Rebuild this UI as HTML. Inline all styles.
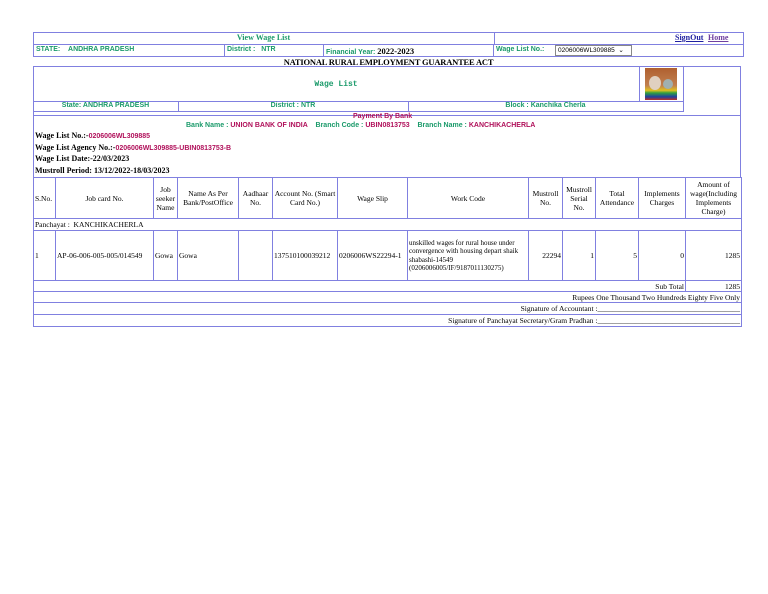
<!DOCTYPE html>
<html><head><meta charset="utf-8"><style>
*{margin:0;padding:0;box-sizing:border-box}
body{width:768px;height:594px;background:#fff;position:relative;overflow:hidden;font-family:"Liberation Serif",serif;font-size:8px;color:#000}
.a{position:absolute}
.b{position:absolute;border:1px solid #8080e0}
.s{font-family:"Liberation Sans","DejaVu Sans",sans-serif;font-weight:bold;font-size:7px}
.g{color:#1a9a6a}.m{color:#b0105a}
table{border-collapse:collapse;position:absolute;left:33px;top:177px;width:708px;table-layout:fixed}
td{border:1px solid #8080e0;font-size:7.5px;text-align:center;line-height:9px;padding:0 1px;overflow:hidden}
.r{text-align:right}.l{text-align:left}
</style></head><body>
<div class="b" style="left:33px;top:32px;width:711px;height:25px;border-width:1.5px"></div>
<div class="b" style="left:33px;top:44px;width:711px;height:1px;border-width:1px 0 0 0"></div>
<div class="b" style="left:494px;top:32px;width:1px;height:13px;border-width:0 0 0 1px"></div>
<div class="b" style="left:224px;top:44px;width:1px;height:13px;border-width:0 0 0 1px"></div>
<div class="b" style="left:323px;top:44px;width:1px;height:13px;border-width:0 0 0 1px"></div>
<div class="b" style="left:493px;top:44px;width:1px;height:13px;border-width:0 0 0 1px"></div>
<div class="a g" style="left:33px;width:461px;top:33px;text-align:center;font-weight:bold;font-size:8px">View Wage List</div>
<div class="a" style="left:675px;top:33px;font-weight:bold;font-size:8px;color:#2020a0;text-decoration:underline">SignOut</div>
<div class="a" style="left:708px;top:33px;font-weight:bold;font-size:8px;color:#7040a0;text-decoration:underline">Home</div>
<div class="a s g" style="left:36px;top:46px">STATE:&nbsp;&nbsp;&nbsp;&nbsp;ANDHRA PRADESH</div>
<div class="a s g" style="left:227px;top:46px">District :&nbsp;&nbsp;&nbsp;NTR</div>
<div class="a s g" style="left:326px;top:46px">Financial Year: <span style="color:#000;font-family:'Liberation Serif',serif;font-size:8.5px">2022-2023</span></div>
<div class="a s g" style="left:496px;top:46px">Wage List No.:</div>
<div class="a" style="left:555px;top:45px;width:77px;height:11px;border:1px solid #888;font-family:'Liberation Sans',sans-serif;font-size:6.5px;line-height:9px;padding-left:2px">0206006WL309885 &nbsp;⌄</div>
<div class="a" style="left:33px;width:711px;top:57px;text-align:center;font-weight:bold;font-size:8.5px;letter-spacing:-0.2px">NATIONAL RURAL EMPLOYMENT GUARANTEE ACT</div>
<div class="b" style="left:33px;top:66px;width:708px;height:50px;border-width:1.5px"></div>
<div class="b" style="left:33px;top:101px;width:651px;height:1px;border-width:1px 0 0 0"></div>
<div class="b" style="left:33px;top:111px;width:651px;height:1px;border-width:1px 0 0 0"></div>
<div class="b" style="left:639px;top:66px;width:1px;height:36px;border-width:0 0 0 1px"></div>
<div class="b" style="left:683px;top:66px;width:1px;height:46px;border-width:0 0 0 1px"></div>
<div class="b" style="left:178px;top:101px;width:1px;height:11px;border-width:0 0 0 1px"></div>
<div class="b" style="left:408px;top:101px;width:1px;height:11px;border-width:0 0 0 1px"></div>
<div class="a g" style="left:33px;width:606px;top:80px;text-align:center;font-family:'Liberation Mono',monospace;font-weight:bold;font-size:8px">Wage List</div>
<div class="a" style="left:645px;top:68px;width:32px;height:32px;background:linear-gradient(#b06030 0,#c08050 55%,#e0c020 70%,#30a040 78%,#2040a0 90%,#c03020 100%)">
<div class="a" style="left:4px;top:8px;width:12px;height:14px;border-radius:50%;background:#e0d0c0"></div>
<div class="a" style="left:18px;top:11px;width:10px;height:10px;border-radius:50%;background:#a0b0b0"></div></div>
<div class="a s g" style="left:33px;width:145px;top:102px;text-align:center">State: ANDHRA PRADESH</div>
<div class="a s g" style="left:178px;width:230px;top:102px;text-align:center">District : NTR</div>
<div class="a s g" style="left:408px;width:275px;top:102px;text-align:center">Block : Kanchika Cherla</div>
<div class="b" style="left:33px;top:116px;width:1px;height:61px;border-width:0 0 0 1px"></div>
<div class="b" style="left:740px;top:116px;width:1px;height:61px;border-width:0 0 0 1px"></div>
<div class="a s m" style="left:353px;top:113px">Payment By Bank</div>
<div class="a s" style="left:186px;top:122px"><span class="g">Bank Name : </span><span class="m">UNION BANK OF INDIA</span>&nbsp;&nbsp;&nbsp;&nbsp;<span class="g">Branch Code : </span><span class="m">UBIN0813753</span>&nbsp;&nbsp;&nbsp;&nbsp;<span class="g">Branch Name : </span><span class="m">KANCHIKACHERLA</span></div>
<div class="a" style="left:35px;top:131px;font-weight:bold">Wage List No.:-<span class="s m">0206006WL309885</span></div>
<div class="a" style="left:35px;top:143px;font-weight:bold">Wage List Agency No.:-<span class="s m">0206006WL309885-UBIN0813753-B</span></div>
<div class="a" style="left:35px;top:154px;font-weight:bold">Wage List Date:-22/03/2023</div>
<div class="a" style="left:35px;top:166px;font-weight:bold">Mustroll Period: 13/12/2022-18/03/2023</div>
<table>
<colgroup><col style="width:22px"><col style="width:98px"><col style="width:24px"><col style="width:61px"><col style="width:34px"><col style="width:65px"><col style="width:70px"><col style="width:121px"><col style="width:34px"><col style="width:33px"><col style="width:43px"><col style="width:47px"><col style="width:56px"></colgroup>
<tr style="height:41px"><td class="l">S.No.</td><td>Job card No.</td><td>Job seeker Name</td><td>Name As Per Bank/PostOffice</td><td>Aadhaar No.</td><td>Account No. (Smart Card No.)</td><td>Wage Slip</td><td>Work Code</td><td>Mustroll No.</td><td>Mustroll Serial No.</td><td>Total Attendance</td><td>Implements Charges</td><td>Amount of wage(Including Implements Charge)</td></tr>
<tr style="height:12px"><td colspan="9" class="l" style="border-right:none">Panchayat :&nbsp; KANCHIKACHERLA</td><td colspan="4" style="border-left:none"></td></tr>
<tr style="height:50px"><td class="l">1</td><td class="l">AP-06-006-005-005/014549</td><td class="l" style="white-space:nowrap">Gowa</td><td class="l">Gowa</td><td></td><td class="l">137510100039212</td><td class="l" style="white-space:nowrap">0206006WS22294-1</td><td class="l" style="font-size:7px;line-height:8.5px">unskilled wages for rural house under convergence with housing depart shaik shabashi-14549 (0206006005/IF/9187011130275)</td><td class="r">22294</td><td class="r">1</td><td class="r">5</td><td class="r">0</td><td class="r">1285</td></tr>
<tr style="height:11px"><td colspan="12" class="r">Sub Total</td><td class="r">1285</td></tr>
<tr style="height:11px"><td colspan="13" class="r">Rupees One Thousand Two Hundreds Eighty Five Only</td></tr>
<tr style="height:12px"><td colspan="13" class="r">Signature of Accountant :______________________________________</td></tr>
<tr style="height:12px"><td colspan="13" class="r">Signature of Panchayat Secretary/Gram Pradhan :______________________________________</td></tr>
</table>
</body></html>
